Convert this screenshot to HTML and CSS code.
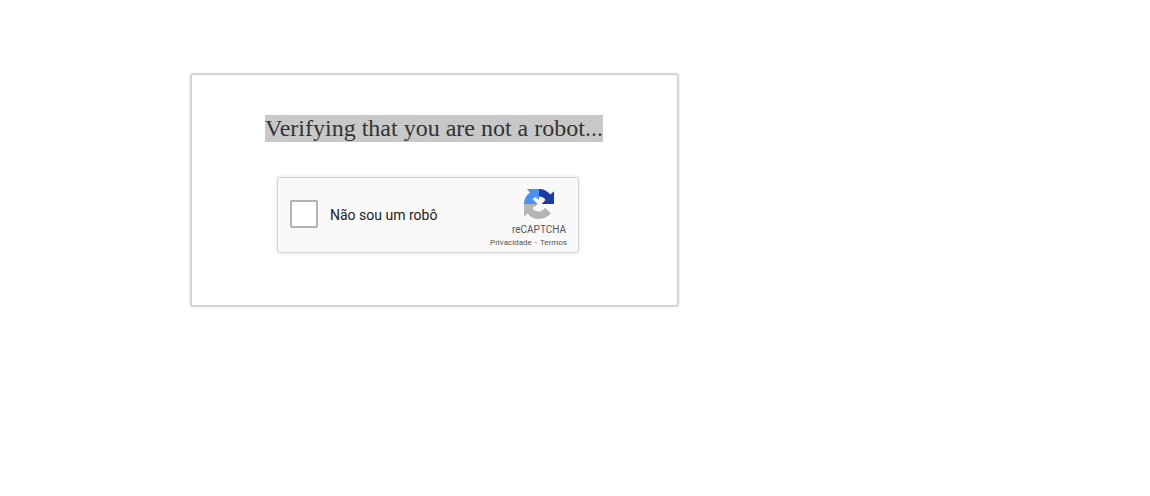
FILE: index.html
```html
<!DOCTYPE html>
<html lang="pt-BR">
<head>
<meta charset="utf-8">
<title>Verification</title>
<link rel="stylesheet" href="styles.css">
</head>
<body>
<main class="card">
  <h1 class="title"><span class="selected">Verifying that you are not a robot...</span></h1>
  <div class="captcha">
    <div class="checkbox" role="checkbox" aria-checked="false" tabindex="0"></div>
    <div class="label">Não sou um robô</div>
    <div class="brand">
      <svg class="logo" viewBox="0 0 30 30" aria-hidden="true">
        <path fill="#4a90f5" d="M15 0H3l3 3.5C2.200 6.300 0 10.300 0 15h8.500L11 17l2.500-2-5-5 3-2L15 11z"/>
        <path fill="#1c3aa9" d="M15 0c4.700 0 8.500 2 11.300 5.600L30 2.200V15H17.500l4-4c-1.200-2.100-3.300-3.300-6.500-3.500z"/>
        <path fill="#b5b5b5" d="M0 15h12.500l-4 4c1.200 2.100 3.300 3.300 6.500 3.500 2.800 0 4.500-1.500 6-3.800l5.700 5.600C23.800 28 19.800 30 15 30c-4.700 0-8.500-2-11.300-5.600L0 27.800z"/>
      </svg>
      <div class="name">reCAPTCHA</div>
      <div class="links"><span>Privacidade</span><span>-</span><span>Termos</span></div>
    </div>
  </div>
</main>
</body>
</html>
```
FILE: styles.css
```css
body {
  min-height: 100vh;
  margin: 0;
  display: flow-root;
  background: #fff;
}

.card {
  box-sizing: border-box;
  width: 487px;
  height: 232px;
  margin: 74px 0 0 191px;
  padding: 40px 0 0;
  border: 1px solid #ccc;
  box-shadow: 0 0 3px #aaa;
}

.title {
  margin: 0 0 35px 73px;
  font: 24px/27px "Liberation Serif", "Times New Roman", serif;
  color: #333;
  white-space: nowrap;
}

.selected {
  display: inline-block;
  background: #c8c8c8;
}

.captcha {
  box-sizing: border-box;
  display: flex;
  width: 302px;
  height: 76px;
  margin-left: 85px;
  border: 1px solid #d3d3d3;
  border-radius: 3px;
  background: #f9f9f9;
  box-shadow: 0 0 4px 1px rgba(0, 0, 0, 0.08);
  font-family: Roboto, sans-serif;
}

.checkbox {
  box-sizing: border-box;
  width: 28px;
  height: 28px;
  margin: 22px 12px 0;
  border: 2px solid #b2b2b2;
  border-radius: 2px;
  background: #fff;
}

.label {
  margin-top: 29px;
  font-size: 14px;
  line-height: 17px;
  color: #222;
}

.brand {
  display: flex;
  flex-direction: column;
  align-items: flex-end;
  margin: 11px 11px 0 auto;
  color: #555;
}

.logo {
  width: 30px;
  height: 30px;
  margin-right: 13px;
}

.name {
  margin: 5px 1px 0 0;
  font-size: 10px;
  line-height: 12px;
}

.links {
  display: flex;
  gap: 3px;
  margin-top: 2px;
  font-size: 8px;
  line-height: 10px;
}
```
